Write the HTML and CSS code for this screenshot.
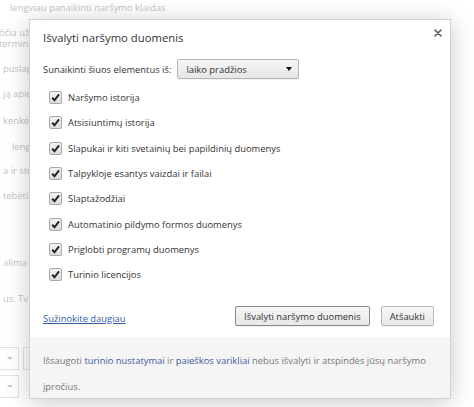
FILE: index.html
```html
<!DOCTYPE html>
<html lang="lt">
<head>
<meta charset="utf-8">
<title>Išvalyti naršymo duomenis</title>
<link rel="stylesheet" href="styles.css">
</head>
<body>
<div class="page">
  <div class="bg-line l1">lengviau panaikinti naršymo klaidas</div>
  <div class="bg-clip">
    <div class="bg-para l2">óčia už<br>termin</div>
    <div class="bg-line l3">puslap</div>
    <div class="bg-line l4">ją apie</div>
    <div class="bg-line l5">kenkė</div>
    <div class="bg-line l6 indent">lengv</div>
    <div class="bg-line l7">a ir str</div>
    <div class="bg-line l8">tebėti</div>
    <div class="bg-line l9">alima</div>
    <div class="bg-line l10">us. Tv</div>
    <div class="bg-selects">
      <div class="bg-row"><span class="bg-box"><i class="bg-arrow"></i></span><span class="bg-box wide"></span></div>
      <div class="bg-row"><span class="bg-box"><i class="bg-arrow"></i></span></div>
    </div>
  </div>
</div>

<div class="dialog">
  <button class="close" aria-label="Uždaryti">
    <svg width="8" height="8" viewBox="0 0 8 8"><path d="M1 1 L7 7 M7 1 L1 7" stroke="#5a5a5a" stroke-width="1.6" stroke-linecap="round"/></svg>
  </button>
  <div class="content">
    <h1 class="title">Išvalyti naršymo duomenis</h1>
    <div class="range-row">
      <span>Sunaikinti šiuos elementus iš:</span>
      <div class="select">
        <span>laiko pradžios</span>
        <i class="select-arrow"></i>
      </div>
    </div>
    <ul class="checks">
      <li><span class="cb"><svg viewBox="0 0 13 13" width="13" height="13"><path d="M3.2 6.8 L5.5 9.3 L10 3.4" fill="none" stroke="#222" stroke-width="2"/></svg></span>Naršymo istorija</li>
      <li><span class="cb"><svg viewBox="0 0 13 13" width="13" height="13"><path d="M3.2 6.8 L5.5 9.3 L10 3.4" fill="none" stroke="#222" stroke-width="2"/></svg></span>Atsisiuntimų istorija</li>
      <li><span class="cb"><svg viewBox="0 0 13 13" width="13" height="13"><path d="M3.2 6.8 L5.5 9.3 L10 3.4" fill="none" stroke="#222" stroke-width="2"/></svg></span>Slapukai ir kiti svetainių bei papildinių duomenys</li>
      <li><span class="cb"><svg viewBox="0 0 13 13" width="13" height="13"><path d="M3.2 6.8 L5.5 9.3 L10 3.4" fill="none" stroke="#222" stroke-width="2"/></svg></span>Talpykloje esantys vaizdai ir failai</li>
      <li><span class="cb"><svg viewBox="0 0 13 13" width="13" height="13"><path d="M3.2 6.8 L5.5 9.3 L10 3.4" fill="none" stroke="#222" stroke-width="2"/></svg></span>Slaptažodžiai</li>
      <li><span class="cb"><svg viewBox="0 0 13 13" width="13" height="13"><path d="M3.2 6.8 L5.5 9.3 L10 3.4" fill="none" stroke="#222" stroke-width="2"/></svg></span>Automatinio pildymo formos duomenys</li>
      <li><span class="cb"><svg viewBox="0 0 13 13" width="13" height="13"><path d="M3.2 6.8 L5.5 9.3 L10 3.4" fill="none" stroke="#222" stroke-width="2"/></svg></span>Priglobti programų duomenys</li>
      <li><span class="cb"><svg viewBox="0 0 13 13" width="13" height="13"><path d="M3.2 6.8 L5.5 9.3 L10 3.4" fill="none" stroke="#222" stroke-width="2"/></svg></span>Turinio licencijos</li>
    </ul>
    <div class="actions">
      <a class="learn" href="#">Sužinokite daugiau</a>
      <div class="buttons">
        <button class="btn primary">Išvalyti naršymo duomenis</button>
        <button class="btn">Atšaukti</button>
      </div>
    </div>
  </div>
  <div class="footer">
    <p class="note">Išsaugoti <a href="#">turinio nustatymai</a> ir <a href="#">paieškos varikliai</a> nebus išvalyti ir atspindės jūsų naršymo <span>įpročius.</span></p>
  </div>
</div>
</body>
</html>
```

FILE: styles.css
```css
* { box-sizing: border-box; }

html, body {
  margin: 0;
  padding: 0;
  background: #fff;
  width: 474px;
  height: 407px;
  overflow: hidden;
  font-family: "Open Sans", "Liberation Sans", sans-serif;
}

.page {
  padding-top: 2px;
  color: #c4c4c4;
  font-size: 9.4px;
  line-height: 12px;
}

.bg-clip {
  width: 29px;
  overflow: hidden;
}

.bg-line, .bg-para {
  white-space: nowrap;
  padding-left: 3px;
}
.l1 { padding-left: 10px; }
.l2 { margin-top: 13px; line-height: 11px; margin-left: -4px; }
.l3 { margin-top: 14px; }
.l4 { margin-top: 13px; }
.l5 { margin-top: 15px; }
.l6 { margin-top: 14px; }
.indent { padding-left: 12px; }
.l7 { margin-top: 12px; }
.l8 { margin-top: 13px; }
.l9 { margin-top: 55px; }
.l10 { margin-top: 24px; }

.bg-selects {
  margin-top: 42px;
  display: flex;
  flex-direction: column;
  gap: 5px;
}
.bg-row { display: flex; gap: 4px; }
.bg-box {
  display: flex;
  align-items: center;
  justify-content: flex-end;
  width: 19px;
  height: 23px;
  border: 1px solid #e2e2e2;
  border-left: none;
  padding-right: 5px;
  flex: none;
}
.bg-box.wide { width: 40px; border-left: 1px solid #e2e2e2; }
.bg-arrow {
  width: 0;
  height: 0;
  border-left: 3px solid transparent;
  border-right: 3px solid transparent;
  border-top: 3px solid #c8c8c8;
}

.dialog {
  position: absolute;
  left: 29px;
  top: 19px;
  width: 422px;
  height: 380px;
  background: #fff;
  border: 1px solid rgba(0, 0, 0, 0.18);
  box-shadow: 0 3px 22px rgba(0, 0, 0, 0.22);
  display: flex;
  flex-direction: column;
  color: #333;
  font-size: 9.4px;
}

.close {
  position: absolute;
  top: 8px;
  right: 8px;
  width: 9px;
  height: 9px;
  padding: 0;
  border: none;
  background: none;
  display: flex;
  align-items: center;
  justify-content: center;
}

.content {
  flex: 1;
  padding: 11px 16px 0 13px;
}

.title {
  margin: 0;
  font-size: 11.3px;
  font-weight: normal;
  line-height: 14px;
  color: #333;
}

.range-row {
  margin-top: 14px;
  display: flex;
  align-items: center;
  gap: 6px;
  height: 20px;
}

.select {
  width: 122px;
  height: 20px;
  border: 1px solid #b5b5b5;
  border-radius: 2px;
  background: linear-gradient(#f6f6f6, #e6e6e6);
  box-shadow: 0 1px 0 rgba(0, 0, 0, 0.05);
  display: flex;
  align-items: center;
  justify-content: space-between;
  padding: 0 6px 0 8px;
  color: #333;
}
.select-arrow {
  width: 0;
  height: 0;
  border-left: 3.5px solid transparent;
  border-right: 3.5px solid transparent;
  border-top: 4px solid #111;
}

.checks {
  list-style: none;
  margin: 6px 0 0;
  padding: 0 0 0 6px;
}
.checks li {
  height: 25.3px;
  display: flex;
  align-items: center;
  gap: 6px;
}
.cb {
  width: 13px;
  height: 13px;
  border: 1px solid #a8a8a8;
  border-radius: 2px;
  background: linear-gradient(#f2f2f2, #dcdcdc);
  display: flex;
  align-items: center;
  justify-content: center;
  position: relative;
}
.cb svg { position: absolute; left: -1px; top: -1px; }

.actions {
  margin-top: 19px;
  display: flex;
  align-items: center;
  justify-content: space-between;
}
.learn {
  color: #2f5ba6;
  text-decoration: underline;
  padding-top: 4px;
}
.buttons { display: flex; gap: 11px; }
.btn {
  height: 20px;
  font-family: inherit;
  font-size: 9.4px;
  color: #333;
  padding: 0 8px;
  white-space: nowrap;
  border: 1px solid #b8b8b8;
  border-radius: 2px;
  background: linear-gradient(#f7f7f7, #e7e7e7);
  box-shadow: 0 1px 0 rgba(0, 0, 0, 0.06);
}
.btn.primary {
  border-color: #8a8a8a;
}

.footer {
  height: 60px;
  background: #f5f5f5;
  border-top: 1px solid #ececec;
  padding: 9px 14px 0 13px;
  color: #777;
  font-size: 9.4px;
}
.note {
  margin: 0;
  line-height: 26px;
}
.note a { color: #3b5aa0; text-decoration: none; }
```
